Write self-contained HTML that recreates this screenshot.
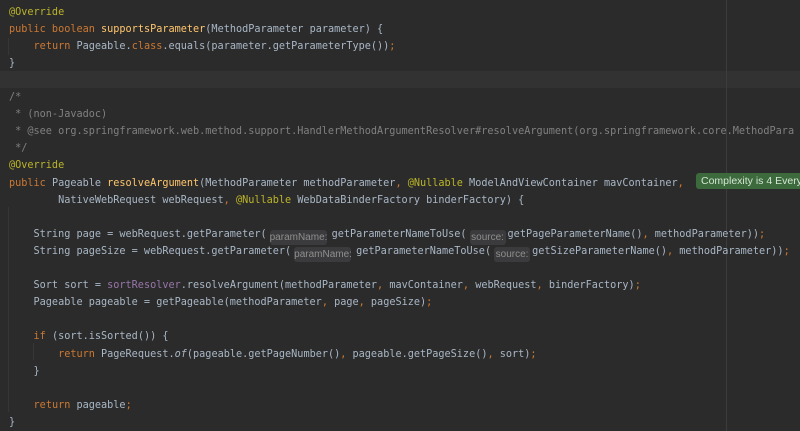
<!DOCTYPE html>
<html><head><meta charset="utf-8"><style>
html,body{margin:0;padding:0;}
body{width:800px;height:431px;overflow:hidden;background:#2b2b2b;position:relative;font-family:"DejaVu Sans Mono","Liberation Mono",monospace;font-size:10.2px;color:#a9b7c6;}
.l{position:absolute;left:9px;height:17px;line-height:17px;white-space:pre;}
.k{color:#cc7832}.m{color:#ffc66d}.a{color:#bbb529}.c{color:#808080}.f{color:#9876aa}.i{font-style:italic}
.h{display:inline-block;box-sizing:border-box;background:#3b3b3d;color:#8f8f8f;font-family:"Liberation Sans",sans-serif;font-size:10px;border-radius:3px;line-height:13px;height:15px;padding-top:1px;text-align:center;vertical-align:-3px;}
.pn{width:57px;margin:0 5px 0 3px;}
.sr{width:36px;margin:0 2px 0 3px;}
.cur{position:absolute;left:0;right:0;top:71px;height:17px;background:#323232;}
.guide{position:absolute;left:726px;top:0;width:1px;height:431px;background:#3c3c3c;}
.badge{position:absolute;left:696px;top:173px;height:16px;line-height:16px;background:#3d6a3d;color:#d4e6d4;font-family:"Liberation Sans",sans-serif;font-size:10.5px;padding:0 5px;border-radius:3px;white-space:nowrap;}
.ig{position:absolute;width:1px;background:#363636;}
</style></head><body>
<div class="cur"></div>
<div class="guide"></div>
<div class="ig" style="left:8px;top:38px;height:17px"></div>
<div class="ig" style="left:8px;top:207px;height:205px"></div>
<div class="ig" style="left:33px;top:343px;height:17px"></div>
<div class="l" style="top:3.5px"><span class="a">@Override</span></div>
<div class="l" style="top:20.6px"><span class="k">public boolean </span><span class="m">supportsParameter</span>(MethodParameter parameter) {</div>
<div class="l" style="top:37.7px">    <span class="k">return </span>Pageable.<span class="k">class</span>.equals(parameter.getParameterType())<span class="k">;</span></div>
<div class="l" style="top:54.8px">}</div>
<div class="l c" style="top:89px">/*</div>
<div class="l c" style="top:106.1px"> * (non-Javadoc)</div>
<div class="l c" style="top:123.2px"> * @see org.springframework.web.method.support.HandlerMethodArgumentResolver#resolveArgument(org.springframework.core.MethodPara</div>
<div class="l c" style="top:140.3px"> */</div>
<div class="l" style="top:157.4px"><span class="a">@Override</span></div>
<div class="l" style="top:174.5px"><span class="k">public </span>Pageable <span class="m">resolveArgument</span>(MethodParameter methodParameter<span class="k">, </span><span class="a">@Nullable</span> ModelAndViewContainer mavContainer<span class="k">,</span></div>
<div class="badge">Complexity is 4 Everything</div>
<div class="l" style="top:191.6px">        NativeWebRequest webRequest<span class="k">, </span><span class="a">@Nullable</span> WebDataBinderFactory binderFactory) {</div>
<div class="l" style="top:225.8px">    String page = webRequest.getParameter(<span class="h pn">paramName:</span>getParameterNameToUse(<span class="h sr">source:</span>getPageParameterName()<span class="k">, </span>methodParameter))<span class="k">;</span></div>
<div class="l" style="top:242.9px">    String pageSize = webRequest.getParameter(<span class="h pn">paramName:</span>getParameterNameToUse(<span class="h sr">source:</span>getSizeParameterName()<span class="k">, </span>methodParameter))<span class="k">;</span></div>
<div class="l" style="top:277.1px">    Sort sort = <span class="f">sortResolver</span>.resolveArgument(methodParameter<span class="k">, </span>mavContainer<span class="k">, </span>webRequest<span class="k">, </span>binderFactory)<span class="k">;</span></div>
<div class="l" style="top:294.2px">    Pageable pageable = getPageable(methodParameter<span class="k">, </span>page<span class="k">, </span>pageSize)<span class="k">;</span></div>
<div class="l" style="top:328.4px">    <span class="k">if </span>(sort.isSorted()) {</div>
<div class="l" style="top:345.5px">        <span class="k">return </span>PageRequest.<span class="i">of</span>(pageable.getPageNumber()<span class="k">, </span>pageable.getPageSize()<span class="k">, </span>sort)<span class="k">;</span></div>
<div class="l" style="top:362.6px">    }</div>
<div class="l" style="top:396.8px">    <span class="k">return </span>pageable<span class="k">;</span></div>
<div class="l" style="top:413.9px">}</div>
</body></html>
